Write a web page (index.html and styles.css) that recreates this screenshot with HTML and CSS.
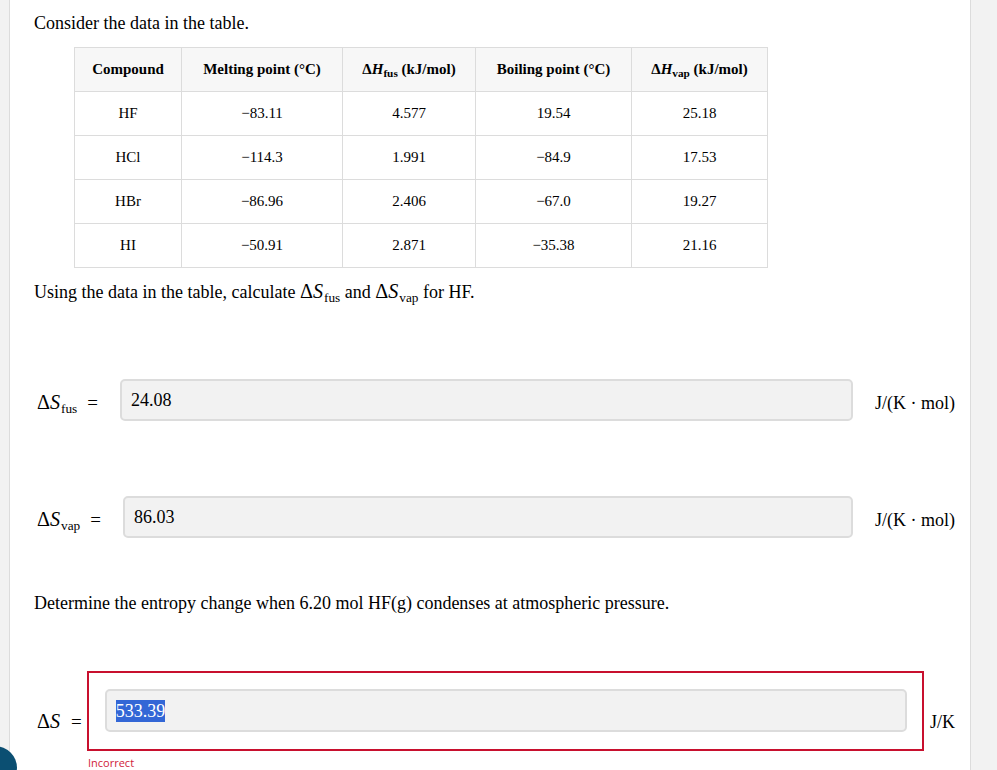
FILE: index.html
```html
<!DOCTYPE html>
<html>
<head>
<meta charset="utf-8">
<title>Entropy</title>
<link rel="stylesheet" href="styles.css">
</head>
<body>
<div class="page">
  <div class="gutter"></div>
  <main class="content">
    <p class="text">Consider the data in the table.</p>
    <table class="data">
      <colgroup>
        <col class="c1"><col class="c2"><col class="c3"><col class="c4"><col class="c5">
      </colgroup>
      <thead>
        <tr>
          <th>Compound</th>
          <th>Melting point (°C)</th>
          <th>Δ<i>H</i><sub>fus</sub> (kJ/mol)</th>
          <th>Boiling point (°C)</th>
          <th>Δ<i>H</i><sub>vap</sub> (kJ/mol)</th>
        </tr>
      </thead>
      <tbody>
        <tr><td>HF</td><td>−83.11</td><td>4.577</td><td>19.54</td><td>25.18</td></tr>
        <tr><td>HCl</td><td>−114.3</td><td>1.991</td><td>−84.9</td><td>17.53</td></tr>
        <tr><td>HBr</td><td>−86.96</td><td>2.406</td><td>−67.0</td><td>19.27</td></tr>
        <tr><td>HI</td><td>−50.91</td><td>2.871</td><td>−35.38</td><td>21.16</td></tr>
      </tbody>
    </table>
    <p class="text q2">Using the data in the table, calculate <span class="m">Δ<i>S</i><sub>fus</sub></span> and <span class="m">Δ<i>S</i><sub>vap</sub></span> for HF.</p>

    <div class="row r1">
      <span class="label"><span class="m">Δ<i>S</i><sub>fus</sub></span><span class="eq">=</span></span>
      <div class="field gap-l">24.08</div>
      <span class="unit">J/(K · mol)</span>
    </div>

    <div class="row r2">
      <span class="label"><span class="m">Δ<i>S</i><sub>vap</sub></span><span class="eq">=</span></span>
      <div class="field gap-l">86.03</div>
      <span class="unit">J/(K · mol)</span>
    </div>

    <p class="text q3">Determine the entropy change when 6.20 mol HF(g) condenses at atmospheric pressure.</p>

    <div class="row r3">
      <span class="label"><span class="m">Δ<i>S</i></span><span class="eq">=</span></span>
      <div class="wrong">
        <div class="field tall"><span class="sel">533.39</span></div>
      </div>
      <span class="unit">J/K</span>
    </div>
    <div class="feedback">Incorrect</div>
  </main>
  <div class="side"></div>
</div>
<div class="dot"></div>
</body>
</html>
```
FILE: styles.css
```css
html, body {
  margin: 0;
  height: 100%;
  overflow: hidden;
}
body {
  font-family: "Liberation Serif", "Times New Roman", serif;
  color: #000;
  background: #fff;
}
.page {
  display: flex;
  height: 100%;
}
.gutter {
  flex: none;
  width: 9px;
  background: #f2f2f2;
  border-right: 1px solid #dcdcdc;
}
.content {
  flex: none;
  width: 960px;
  box-sizing: border-box;
  padding: 11px 15px 0 24px;
  background: #fff;
}
.side {
  flex: 1;
  background: #f2f2f2;
  border-left: 1px solid #dcdcdc;
}
.text {
  margin: 0;
  font-size: 18px;
  line-height: 24px;
}
sub {
  font-size: 0.72em;
  vertical-align: -0.3em;
  line-height: 0;
}
.m {
  font-size: 1.12em;
  line-height: 0;
}
.m i {
  margin-right: 1px;
}
.m sub {
  font-size: 0.66em;
  vertical-align: -0.28em;
}
.data {
  margin: 12px 0 0 40px;
  border-collapse: collapse;
  table-layout: fixed;
  width: 693px;
  font-size: 15px;
}
.c1 { width: 107px; }
.c2 { width: 161px; }
.c3 { width: 133px; }
.c4 { width: 156px; }
.c5 { width: 136px; }
.data th, .data td {
  border: 1px solid #dcdcdc;
  height: 43px;
  padding: 0;
  text-align: center;
  vertical-align: middle;
}
.data th {
  background: #f7f7f7;
  font-weight: bold;
}
.data th sub {
  font-size: 0.75em;
}
.q2 { margin-top: 12px; }
.q3 { margin-top: 53px; }
.row {
  display: flex;
  align-items: center;
  padding-left: 3px;
}
.r1 { margin-top: 75px; }
.r2 { margin-top: 75px; }
.r3 {
  margin-top: 56px;
  align-items: flex-end;
}
.label, .unit {
  font-size: 18px;
  line-height: 24px;
  white-space: nowrap;
}
.r1 .label, .r1 .unit, .r2 .label, .r2 .unit {
  margin-top: 6px;
}
.eq {
  margin-left: 10px;
  font-size: 19px;
}
.field {
  flex: 1;
  height: 42px;
  box-sizing: border-box;
  background: #f2f2f2;
  border: 2px solid #dcdcdc;
  border-radius: 5px;
  padding-left: 9px;
  display: flex;
  align-items: center;
  font-size: 18px;
  line-height: 24px;
}
.field.tall { height: 43px; }
.gap-l { margin-left: 22px; }
.unit { margin-left: 22px; }
.wrong {
  flex: 1;
  margin-left: 5px;
  border: 2px solid #c8102e;
  padding: 16px 15px 17px 16px;
  display: flex;
}
.r3 .label { margin-bottom: 17px; }
.r3 .eq { margin-left: 10px; }
.r3 .unit { margin-left: 6px; margin-bottom: 17px; }
.sel {
  background: #3367d6;
  color: #fff;
  line-height: 22px;
  display: inline-block;
}
.feedback {
  margin: 4px 0 0 54px;
  font-family: "Open Sans", "Liberation Sans", sans-serif;
  font-size: 11px;
  line-height: 15px;
  color: #d0213a;
}
.dot {
  position: fixed;
  left: -27px;
  top: 746px;
  width: 44px;
  height: 44px;
  border-radius: 50%;
  background: #0b4f72;
}
```
